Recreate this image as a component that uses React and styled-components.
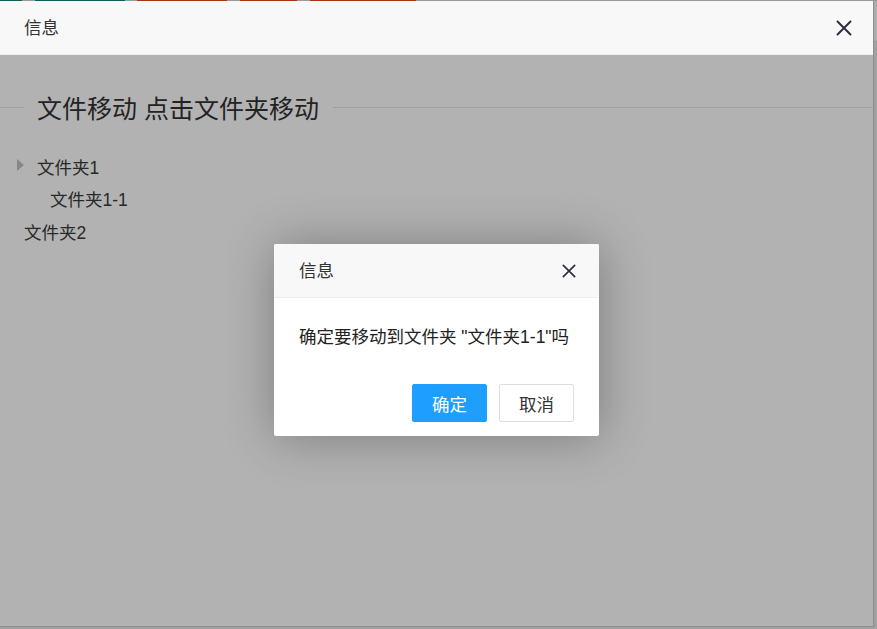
import styled, { createGlobalStyle } from "styled-components";

const GlobalStyle = createGlobalStyle`
    html, body {
        margin: 0;
        padding: 0;
        background: #a1a1a1;
    }
    body {
        font-family: "Liberation Sans", "Noto Sans CJK SC", sans-serif;
        color: #333;
    }
    * {
        box-sizing: border-box;
    }
`

const tabs = [
    { color: "#0d5f54", w: 22 },
    { color: "#9a9a9a", w: 13 },
    { color: "#0d5f54", w: 90 },
    { color: "#9a9a9a", w: 12 },
    { color: "#a7330f", w: 90 },
    { color: "#9a9a9a", w: 13 },
    { color: "#a7330f", w: 57 },
    { color: "#9a9a9a", w: 13 },
    { color: "#a7330f", w: 106 },
]

const tree = [
    { name: "文件夹1", indent: 17, folder: true },
    { name: "文件夹1-1", indent: 50 },
    { name: "文件夹2", indent: 24 },
]

const CloseIcon = ({ size }) => (
    <svg width={size} height={size} viewBox="0 0 16 16">
        <path d="M1.5 1.5 L14.5 14.5 M14.5 1.5 L1.5 14.5" stroke="#2e2d3c" strokeWidth="1.9" strokeLinecap="round" fill="none" />
    </svg>
)

const App = () => {
    return (
        <>
            <GlobalStyle />
            <Page>
                <TabStripe>
                    {tabs.map(({ color, w }, idx) => (
                        <TabMark key={`${idx}-tab`} $color={color} style={{ width: w }} />
                    ))}
                </TabStripe>
                <SideStrip />

                <LayerWindow>
                    <TitleBar $pad={24}>
                        <TitleText>信息</TitleText>
                        <CloseButton $shift={-3}><CloseIcon size={16} /></CloseButton>
                    </TitleBar>

                    <Frame>
                        <FieldTitle>
                            <Rule $w={24} />
                            <Legend>文件移动 点击文件夹移动</Legend>
                            <Rule />
                        </FieldTitle>

                        <Tree>
                            {tree.map(({ name, indent, folder }, idx) => (
                                <TreeRow key={`${idx}-row`} $indent={indent}>
                                    {folder && <Arrow />}
                                    <span>{name}</span>
                                </TreeRow>
                            ))}
                        </Tree>

                        <Shade />

                        <Dialog>
                            <TitleBar $pad={25}>
                                <TitleText>信息</TitleText>
                                <CloseButton $shift={-2}><CloseIcon size={14} /></CloseButton>
                            </TitleBar>
                            <DialogContent>确定要移动到文件夹 "文件夹1-1"吗</DialogContent>
                            <ButtonBar>
                                <Button $primary>确定</Button>
                                <Button>取消</Button>
                            </ButtonBar>
                        </Dialog>
                    </Frame>
                </LayerWindow>
            </Page>
        </>
    )
}

const Page = styled.div`
    position: relative;
    width: 877px;
    height: 629px;
    overflow: hidden;
    background: #a1a1a1;
`

const TabStripe = styled.div`
    display: flex;
    height: 1px;
    background: #9a9a9a;
`

const TabMark = styled.div`
    height: 1px;
    background: ${({ $color }) => $color};
`

const SideStrip = styled.div`
    margin-left: 874px;
    height: 41px;
    border-bottom: 1px solid #9c9c9c;
    background: #acacac;
`

const LayerWindow = styled.div`
    position: absolute;
    left: 0;
    top: 1px;
    width: 874px;
    height: 626px;
    display: flex;
    flex-direction: column;
    border-right: 1px solid #8e8e8e;
    border-bottom: 1px solid #8e8e8e;
    background: #fff;
`

const TitleBar = styled.div`
    display: flex;
    align-items: center;
    justify-content: space-between;
    height: 54px;
    flex-shrink: 0;
    padding: 0 ${({ $pad }) => $pad}px;
    background: #f8f8f8;
    border-bottom: 1px solid #eee;
    font-size: 17.5px;
    color: #333;
`

const TitleText = styled.span`
    margin-top: -2px;
`

const CloseButton = styled.span`
    display: flex;
    align-items: center;
    margin-right: ${({ $shift }) => $shift}px;
    cursor: pointer;
`

const Frame = styled.div`
    position: relative;
    flex: 1;
    overflow: hidden;
    background: #fff;
`

const FieldTitle = styled.div`
    display: flex;
    align-items: center;
    gap: 13px;
    height: 34px;
    margin-top: 35px;
`

const Rule = styled.div`
    height: 1px;
    background: #e6e6e6;
    ${({ $w }) => ($w ? `width: ${$w}px;` : "flex: 1;")}
`

const Legend = styled.div`
    font-size: 25px;
    color: #333;
    white-space: nowrap;
    padding-right: 1px;
`

const Tree = styled.div`
    margin-top: 26px;
    display: flex;
    flex-direction: column;
`

const TreeRow = styled.div`
    display: flex;
    align-items: center;
    gap: 13px;
    height: 32.5px;
    padding-left: ${({ $indent }) => $indent}px;
    font-size: 17.5px;
    color: #3a3a3a;
`

const Arrow = styled.i`
    width: 0;
    height: 0;
    margin-top: -3px;
    border-left: 7px solid #c2c2c2;
    border-top: 6px solid transparent;
    border-bottom: 6px solid transparent;
`

const Shade = styled.div`
    position: absolute;
    inset: 0;
    background: rgba(0, 0, 0, 0.3);
`

const Dialog = styled.div`
    position: absolute;
    left: 274px;
    top: 189px;
    width: 325px;
    background: #fff;
    border-radius: 2px;
    overflow: hidden;
    box-shadow: 1px 1px 50px rgba(0, 0, 0, 0.3);
`

const DialogContent = styled.div`
    padding: 24px 25px;
    font-size: 17.5px;
    line-height: 30px;
    color: #222;
    white-space: nowrap;
`

const ButtonBar = styled.div`
    display: flex;
    justify-content: flex-end;
    gap: 12px;
    padding: 8px 25px 14px;
`

const Button = styled.a`
    display: flex;
    align-items: center;
    justify-content: center;
    width: 75px;
    height: 38px;
    border-radius: 2px;
    font-size: 17.5px;
    border: 1px solid ${({ $primary }) => ($primary ? "#1e9fff" : "#dedede")};
    background: ${({ $primary }) => ($primary ? "#1e9fff" : "#fff")};
    color: ${({ $primary }) => ($primary ? "#fff" : "#333")};
    cursor: pointer;
`

export default App;
